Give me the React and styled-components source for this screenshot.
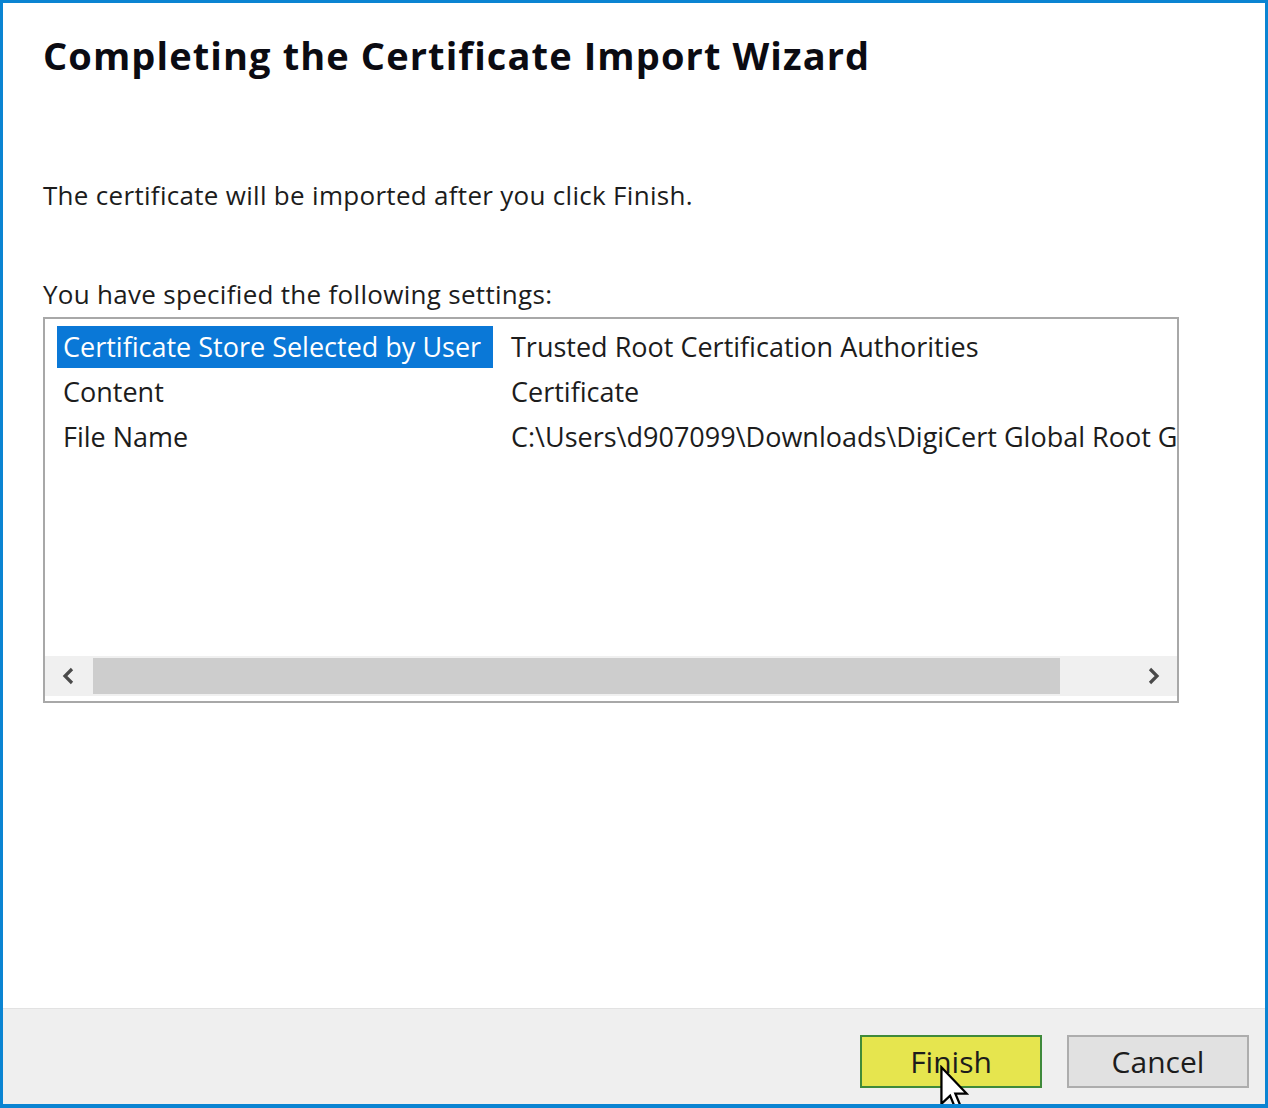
import React from "react";
import styled, { createGlobalStyle } from "styled-components";

const GlobalStyle = createGlobalStyle`
  html, body {
    margin: 0;
    padding: 0;
    background: #ffffff;
  }
  * {
    box-sizing: border-box;
  }
`;

const Window = styled.div`
  width: 1268px;
  height: 1108px;
  border: 3px solid #0a84d2;
  border-bottom-width: 4px;
  display: flex;
  flex-direction: column;
  background: #ffffff;
  position: relative;
  overflow: hidden;
`;

const Body = styled.div`
  flex: 1;
  padding: 28px 0 0 40px;
  display: flex;
  flex-direction: column;
  font-family: "Open Sans", "Noto Sans", sans-serif;
  color: #1c1c1c;
`;

const Title = styled.h1`
  margin: 0;
  font-family: "Open Sans", "Noto Sans", sans-serif;
  font-weight: 700;
  font-size: 38px;
  letter-spacing: 1.1px;
  line-height: 48px;
  color: #0b0b12;
`;

const Para = styled.p`
  margin: ${(p) => p.$top}px 0 0 0;
  font-size: 26px;
  line-height: 34px;
  letter-spacing: 0.3px;
`;

const ListBox = styled.div`
  margin-top: 6px;
  width: 1136px;
  height: 386px;
  border: 2px solid #a8a8a8;
  display: flex;
  flex-direction: column;
  padding-top: 5px;
  overflow: hidden;
`;

const Rows = styled.div`
  flex: 1;
  display: flex;
  flex-direction: column;
`;

const Row = styled.div`
  display: grid;
  grid-template-columns: 448px 1fr;
  height: 45px;
  align-items: center;
  padding-left: 14px;
  white-space: nowrap;
  overflow: hidden;
`;

const Cell = styled.span`
  font-size: 27px;
  color: #1c1c1c;
  overflow: hidden;
  ${(p) =>
    p.$selected &&
    `
    background: #0a78d7;
    color: #ffffff;
    justify-self: start;
    height: 42px;
    line-height: 42px;
    padding: 0 12px 0 6px;
    margin-left: -2px;
  `}
  ${(p) => !p.$selected && `padding-left: 4px;`}
`;

const ScrollBar = styled.div`
  height: 40px;
  margin: 0 0 5px 0;
  display: flex;
  background: #f0f0f0;
`;

const ArrowBtn = styled.div`
  width: ${(p) => p.$w}px;
  display: flex;
  align-items: center;
  justify-content: center;
`;

const Track = styled.div`
  flex: 1;
  display: flex;
  padding: 2px 0;
`;

const Thumb = styled.div`
  background: #cdcdcd;
  height: 100%;
`;

const Footer = styled.div`
  height: 96px;
  background: #efefef;
  border-top: 1px solid #e2e2e2;
  display: flex;
  justify-content: flex-end;
  align-items: flex-start;
  padding: 26px 16px 0 0;
  gap: 25px;
`;

const Button = styled.button`
  width: 182px;
  height: 53px;
  font-family: "Open Sans", "Noto Sans", sans-serif;
  font-size: 30px;
  color: #1c1c1c;
  background: ${(p) => (p.$highlight ? "#e6e54e" : "#e1e1e1")};
  border: 2px solid ${(p) => (p.$highlight ? "#3f8a3a" : "#adadad")};
  padding: 0;
  cursor: default;
`;

const Cursor = styled.svg`
  position: absolute;
  left: 936px;
  top: 1062px;
  width: 30px;
  height: 48px;
`;

const Chevron = ({ dir }) => (
  <svg width="20" height="20" viewBox="0 0 20 20">
    <path
      d={dir === "left" ? "M13 3 L6 10 L13 17" : "M7 3 L14 10 L7 17"}
      fill="none"
      stroke="#4a4a4a"
      strokeWidth="3.2"
    />
  </svg>
);

const rows = [
  ["Certificate Store Selected by User", "Trusted Root Certification Authorities"],
  ["Content", "Certificate"],
  ["File Name", "C:\\Users\\d907099\\Downloads\\DigiCert Global Root G"],
];

export default function App() {
  return (
    <>
      <GlobalStyle />
      <Window>
        <Body>
          <Title>Completing the Certificate Import Wizard</Title>
          <Para $top={99}>The certificate will be imported after you click Finish.</Para>
          <Para $top={65}>You have specified the following settings:</Para>
          <ListBox>
            <Rows>
              {rows.map(([k, v], i) => (
                <Row key={k}>
                  <Cell $selected={i === 0}>{k}</Cell>
                  <Cell>{v}</Cell>
                </Row>
              ))}
            </Rows>
            <ScrollBar>
              <ArrowBtn $w={48}>
                <Chevron dir="left" />
              </ArrowBtn>
              <Track>
                <Thumb style={{ width: "93.3%" }} />
              </Track>
              <ArrowBtn $w={48}>
                <Chevron dir="right" />
              </ArrowBtn>
            </ScrollBar>
          </ListBox>
        </Body>
        <Footer>
          <Button $highlight>Finish</Button>
          <Button>Cancel</Button>
        </Footer>
        <Cursor viewBox="0 0 13 21">
          <path
            d="M1 1 L1 17 L4.8 13.4 L7.3 19.5 L9.6 18.5 L7.1 12.5 L12 12.5 Z"
            fill="#ffffff"
            stroke="#000000"
            strokeWidth="1"
            strokeLinejoin="miter"
          />
        </Cursor>
      </Window>
    </>
  );
}
